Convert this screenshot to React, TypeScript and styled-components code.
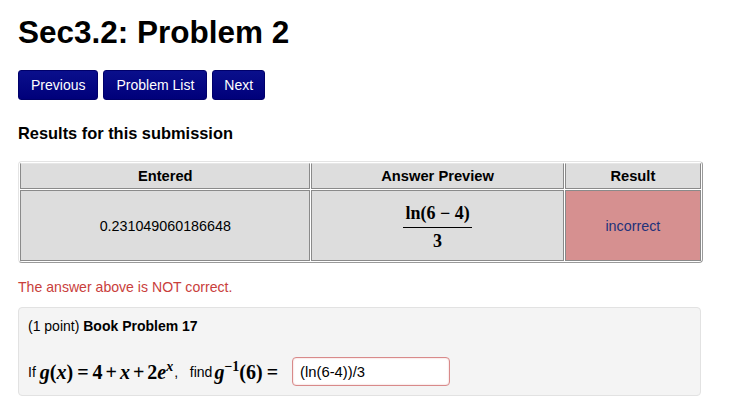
import React from "react";
import styled, { createGlobalStyle } from "styled-components";

const Global = createGlobalStyle`
  html, body { margin: 0; padding: 0; background: #fff; }
  body { font-family: "Liberation Sans", Arial, sans-serif; color: #000; }
`;

const Page = styled.div`
  padding: 0 18px;
  width: 685px;
`;

const Title = styled.h1`
  margin: 14px 0 0;
  font-size: 31.5px;
  line-height: 36px;
  font-weight: bold;
`;

const NavBar = styled.div`
  display: flex;
  gap: 5px;
  margin-top: 20px;
`;

const NavButton = styled.button<{ $pad?: number }>`
  height: 30px;
  padding: 0 ${(p) => p.$pad ?? 12}px;
  border: 1px solid #00006a;
  border-radius: 3px;
  background: linear-gradient(#0a0f8c, #00007a);
  color: #fff;
  font-family: "Liberation Sans", Arial, sans-serif;
  font-size: 14px;
  cursor: pointer;
`;

const SubHeading = styled.h2`
  margin: 23px 0 0;
  font-size: 16.4px;
  line-height: 20px;
  font-weight: bold;
`;

const ResultsTable = styled.table`
  margin-top: 18px;
  width: 685px;
  border-collapse: separate;
  border-spacing: 1px;
  border: 1px solid;
  border-color: #e4e4e4 #9a9a9a #9a9a9a #e4e4e4;
  border-radius: 4px;
`;

const HeadCell = styled.th<{ $w: number }>`
  width: ${(p) => p.$w}px;
  height: 24px;
  padding: 0 5px;
  background: #dddddd;
  border: 1px solid;
  border-color: #e6e6e6 #8a8a8a #8a8a8a #8a8a8a;
  font-weight: bold;
  font-size: 14.7px;
  text-align: center;
`;

const BodyCell = styled.td<{ $bad?: boolean }>`
  height: 69px;
  padding: 0 5px;
  background: ${(p) => (p.$bad ? "#d69090" : "#dddddd")};
  color: ${(p) => (p.$bad ? "#22327a" : "#000")};
  border: 1px solid #8a8a8a;
  text-align: center;
  font-size: 14.3px;
`;

const Frac = styled.span`
  display: inline-flex;
  flex-direction: column;
  align-items: center;
  margin-top: 3px;
  font-family: "Liberation Serif", "Times New Roman", serif;
  font-weight: bold;
  font-size: 18px;
  line-height: 21px;
`;

const Numer = styled.span`
  padding: 0 2px 3px;
  border-bottom: 1.5px solid #000;
  white-space: pre;
`;

const Denom = styled.span`
  padding-top: 3px;
`;

const Message = styled.div`
  margin-top: 15px;
  color: #c9403c;
  font-size: 14.1px;
  line-height: 18px;
`;

const ProblemBox = styled.div`
  margin-top: 11px;
  width: 683px;
  box-sizing: border-box;
  padding: 8px 9px 9px;
  background: #f4f4f4;
  border: 1px solid #e2e2e2;
  border-radius: 4px;
  font-size: 14px;
`;

const ProblemHead = styled.div`
  line-height: 20px;
`;

const ProblemLine = styled.div`
  display: flex;
  align-items: center;
  margin-top: 21px;
  height: 29px;
`;

const Math = styled.span<{ $ml: number; $mr: number }>`
  display: inline-block;
  font-family: "Liberation Serif", "Times New Roman", serif;
  font-weight: bold;
  font-size: 20px;
  line-height: 24px;
  margin: 0 ${(p) => p.$mr}px 0 ${(p) => p.$ml}px;
  white-space: nowrap;
`;

const V = styled.i``;

const BinOp = styled.span`
  margin: 0 3px;
`;

const Rel = styled.span`
  margin: 0 4px;
`;

const Sup = styled.sup`
  font-size: 14px;
  line-height: 0;
  vertical-align: 8px;
`;

const AnswerInput = styled.input`
  width: 158px;
  height: 29px;
  box-sizing: border-box;
  padding: 0 7px;
  border: 1px solid #d88a8a;
  border-radius: 4px;
  box-shadow: inset 0 0 2px rgba(200, 60, 60, 0.35);
  background: #fff;
  font-family: "Liberation Sans", Arial, sans-serif;
  font-size: 14.8px;
  color: #000;
  outline: none;
`;

export default function App() {
  return (
    <Page>
      <Global />
      <Title>Sec3.2: Problem 2</Title>
      <NavBar>
        <NavButton>Previous</NavButton>
        <NavButton>Problem List</NavButton>
        <NavButton $pad={11}>Next</NavButton>
      </NavBar>
      <SubHeading>Results for this submission</SubHeading>
      <ResultsTable>
        <thead>
          <tr>
            <HeadCell $w={280}>Entered</HeadCell>
            <HeadCell $w={242}>Answer Preview</HeadCell>
            <HeadCell $w={125}>Result</HeadCell>
          </tr>
        </thead>
        <tbody>
          <tr>
            <BodyCell>0.231049060186648</BodyCell>
            <BodyCell>
              <Frac>
                <Numer>ln(6 − 4)</Numer>
                <Denom>3</Denom>
              </Frac>
            </BodyCell>
            <BodyCell $bad>incorrect</BodyCell>
          </tr>
        </tbody>
      </ResultsTable>
      <Message>The answer above is NOT correct.</Message>
      <ProblemBox>
        <ProblemHead>
          (1 point) <b>Book Problem 17</b>
        </ProblemHead>
        <ProblemLine>
          <span>If</span>
          <Math $ml={4} $mr={1}>
            <V>g</V>(<V>x</V>)<Rel>=</Rel>4<BinOp>+</BinOp>
            <V>x</V>
            <BinOp>+</BinOp>2<V>e</V>
            <Sup>
              <V>x</V>
            </Sup>
          </Math>
          <span>,&nbsp;&nbsp;&nbsp;find</span>
          <Math $ml={2} $mr={10}>
            <V>g</V>
            <Sup>−1</Sup>(6)<Rel>=</Rel>
          </Math>
          <AnswerInput defaultValue="(ln(6-4))/3" />
        </ProblemLine>
      </ProblemBox>
    </Page>
  );
}
